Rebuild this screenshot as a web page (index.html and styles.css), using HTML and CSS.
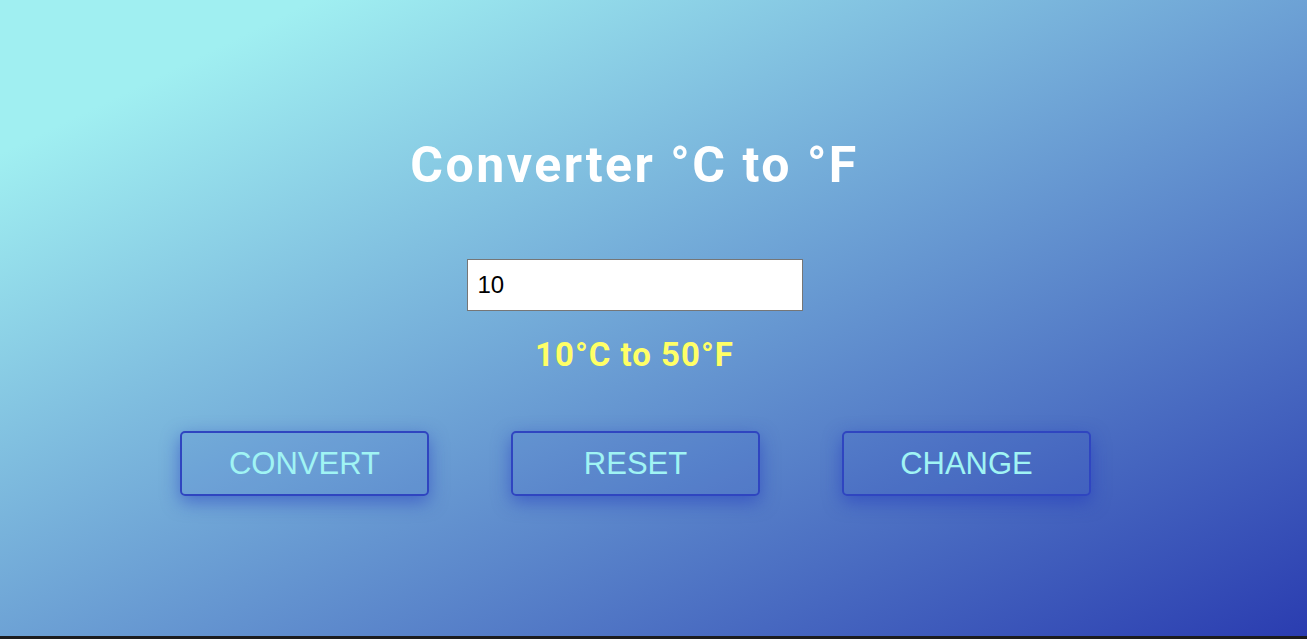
FILE: index.html
```html
<!DOCTYPE html>
<html lang="en">
<head>
    <meta charset="UTF-8">
    <meta name="viewport" content="width=device-width, initial-scale=1.0">
    <title>Converter °C to °F</title>
    <link rel="stylesheet" href="styles.css">
</head>
<body>
    <div class="page">
        <div class="converter">
            <h1 class="title">Converter °C to °F</h1>
            <input id="celsius" class="field" type="text" value="10">
            <div id="result" class="result">10°C to 50°F</div>
            <div class="buttons">
                <button class="btn">CONVERT</button>
                <button class="btn">RESET</button>
                <button class="btn">CHANGE</button>
            </div>
        </div>
    </div>
    <div class="taskbar"></div>
</body>
</html>
```

FILE: styles.css
```css
html, body {
    height: 100%;
}

body {
    margin: 0;
    padding: 0;
    font-family: Roboto, Arial, sans-serif;
    display: flex;
    flex-direction: column;
    background: linear-gradient(to bottom right, #a0eff1 12%, #2a3cb0 100%);
}

.page {
    flex: 1;
    padding-right: 38px;
}

.converter {
    display: flex;
    flex-direction: column;
    align-items: center;
    padding-top: 135px;
}

.title {
    margin: 0;
    color: #ffffff;
    font-size: 50px;
    font-weight: 700;
    letter-spacing: 2.5px;
    line-height: 60px;
}

.field {
    margin-top: 64px;
    width: 336px;
    height: 52px;
    box-sizing: border-box;
    padding: 0 10px;
    border: 1px solid #767676;
    font-family: Arial, "Liberation Sans", sans-serif;
    font-size: 24px;
    color: #000000;
    background: #ffffff;
}

.result {
    margin-top: 24px;
    color: #ffff66;
    font-size: 33px;
    font-weight: 700;
    letter-spacing: 1px;
    line-height: 40px;
}

.buttons {
    display: flex;
    gap: 82px;
    margin-top: 56px;
    padding-left: 2px;
}

.btn {
    width: 249px;
    height: 65px;
    border: 2px solid #2f45c0;
    border-radius: 5px;
    background: rgba(40, 70, 190, 0.08);
    box-shadow: 0 6px 18px rgba(30, 50, 190, 0.5);
    color: #a0f4f4;
    font-family: Arial, "Liberation Sans", sans-serif;
    font-size: 31px;
    cursor: pointer;
}

.taskbar {
    height: 3px;
    background: #1c1c1e;
}
```
